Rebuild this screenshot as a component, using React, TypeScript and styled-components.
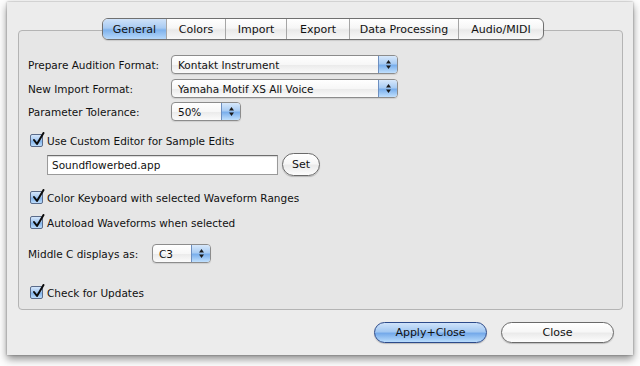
import React from 'react';
import styled, {createGlobalStyle} from 'styled-components';

const Global = createGlobalStyle`
    html, body {
        margin: 0;
        padding: 0;
        background: #fdfdfd;
    }
    body {
        width: 640px;
        height: 366px;
        overflow: hidden;
        font-family: "DejaVu Sans", "Liberation Sans", sans-serif;
        font-size: 10.5px;
        color: #111;
    }
`;

const Window = styled.div`
    margin: 2px 0 0 7px;
    width: 626px;
    height: 353px;
    background: #ececec;
    box-shadow: 0 4px 8px rgba(0, 0, 0, 0.45), 0 0 2px rgba(0, 0, 0, 0.35);
    display: flex;
    flex-direction: column;
    padding: 16px 10px 0 11px;
    box-sizing: border-box;
`;

const TabBar = styled.div`
    display: flex;
    align-self: center;
    margin-left: 5px;
    height: 20px;
    border: 1px solid #707070;
    border-radius: 6px;
    overflow: hidden;
    background: linear-gradient(#ffffff 0%, #f6f6f6 45%, #e9e9e9 55%, #f8f8f8 100%);
    position: relative;
    z-index: 1;
    margin-bottom: -10px;
    box-shadow: 0 1px 1px rgba(0, 0, 0, 0.12);
`;

const Tab = styled.div<{$active?: boolean; $w: number}>`
    width: ${p => p.$w}px;
    display: flex;
    align-items: center;
    justify-content: center;
    border-left: 1px solid ${p => (p.$active ? '#5a6e96' : '#a6a6a6')};
    &:first-child {
        border-left: none;
    }
    background: ${p => (p.$active
        ? 'linear-gradient(#cfe2f9 0%, #a8cbf2 45%, #7fb2ec 55%, #b6d8fa 100%)'
        : 'transparent')};
    font-size: 11px;
`;

const Group = styled.div`
    height: 280px;
    border: 1px solid #b4b4b4;
    border-radius: 4px;
    background: #e6e6e6;
    box-sizing: border-box;
    padding: 0 0 0 9px;
    display: flex;
    flex-direction: column;
`;

const Row = styled.div<{$top: number; $left?: number}>`
    display: flex;
    align-items: center;
    margin-top: ${p => p.$top}px;
    margin-left: ${p => p.$left ?? 0}px;
`;

const Label = styled.div<{$w: number}>`
    width: ${p => p.$w}px;
    white-space: nowrap;
`;

const Popup = styled.div<{$w: number}>`
    width: ${p => p.$w}px;
    height: 19px;
    box-sizing: border-box;
    border: 1px solid #8c8c8c;
    border-radius: 4px;
    display: flex;
    overflow: hidden;
    background: linear-gradient(#ffffff 0%, #f7f7f7 50%, #ebebeb 55%, #fbfbfb 100%);
    box-shadow: 0 1px 1px rgba(0, 0, 0, 0.1);
`;

const PopupText = styled.div`
    flex: 1;
    padding-left: 6px;
    display: flex;
    align-items: center;
    white-space: nowrap;
`;

const PopupArrows = styled.div`
    width: 18px;
    border-left: 1px solid #6d8fc0;
    background: linear-gradient(#d7e8fb 0%, #a9ccf3 45%, #7aafec 55%, #c1e0fd 100%);
    display: flex;
    align-items: center;
    justify-content: center;
`;

const CheckRow = styled.label<{$top: number}>`
    display: flex;
    align-items: center;
    margin-top: ${p => p.$top}px;
    margin-left: 2px;
    gap: 4px;
`;

const CheckBox = styled.div`
    width: 13px;
    height: 13px;
    box-sizing: border-box;
    border: 1px solid #5a6b8a;
    border-radius: 2px;
    background: linear-gradient(#d4e6fb 0%, #a7c9f1 45%, #80b3ec 55%, #bcdcfb 100%);
    position: relative;
    flex: none;
`;

const Tick = styled.svg`
    position: absolute;
    left: 1px;
    top: -3px;
`;

const TextField = styled.div`
    width: 231px;
    height: 20px;
    box-sizing: border-box;
    border: 1px solid #9a9a9a;
    border-top-color: #6e6e6e;
    background: #fff;
    box-shadow: inset 0 1px 1px rgba(0, 0, 0, 0.15);
    display: flex;
    align-items: center;
    padding-left: 4px;
`;

const Button = styled.div<{$w: number; $h?: number; $default?: boolean}>`
    width: ${p => p.$w}px;
    height: ${p => p.$h ?? 21}px;
    box-sizing: border-box;
    border-radius: 12px;
    border: 1px solid ${p => (p.$default ? '#2c4a8a' : '#6a6a6a')};
    background: ${p => (p.$default
        ? 'linear-gradient(#cfe3fa 0%, #a3c8f2 45%, #75aaea 55%, #b9dcfc 100%)'
        : 'linear-gradient(#ffffff 0%, #f7f7f7 45%, #ebebeb 55%, #fdfdfd 100%)')};
    box-shadow: 0 1px 1px rgba(0, 0, 0, 0.2);
    display: flex;
    align-items: center;
    justify-content: center;
    font-size: 11px;
`;

const SetButton = styled(Button)`
    margin-left: 4px;
`;

const Footer = styled.div`
    display: flex;
    justify-content: flex-end;
    gap: 14px;
    margin-top: 12px;
    padding-right: 9px;
`;

function Arrows() {
    return <svg width="7" height="11" viewBox="0 0 7 11">
        <path d="M3.5 1 L6 4.5 L1 4.5 Z" fill="#1a1a1a"/>
        <path d="M3.5 10 L6 6.5 L1 6.5 Z" fill="#1a1a1a"/>
    </svg>;
}

function Select({w, value}: {w: number; value: string}) {
    return <Popup $w={w}>
        <PopupText>{value}</PopupText>
        <PopupArrows><Arrows/></PopupArrows>
    </Popup>;
}

function Check({top, children}: {top: number; children: React.ReactNode}) {
    return <CheckRow $top={top}>
        <CheckBox>
            <Tick width="13" height="14" viewBox="0 0 13 14">
                <path d="M2 8 L5 12 L11.5 1" fill="none" stroke="#0c0c0c" strokeWidth="2"
                      strokeLinejoin="round" strokeLinecap="round"/>
            </Tick>
        </CheckBox>
        <span>{children}</span>
    </CheckRow>;
}

const tabs: [string, number][] = [
    ['General', 63],
    ['Colors', 58],
    ['Import', 60],
    ['Export', 62],
    ['Data Processing', 108],
    ['Audio/MIDI', 84],
];

export default function App() {
    return <>
        <Global/>
        <Window>
            <TabBar>
                {tabs.map(([name, w], i) => <Tab key={name} $w={w} $active={i === 0}>{name}</Tab>)}
            </TabBar>
            <Group>
                <Row $top={24}>
                    <Label $w={143}>Prepare Audition Format:</Label>
                    <Select w={227} value="Kontakt Instrument"/>
                </Row>
                <Row $top={5}>
                    <Label $w={143}>New Import Format:</Label>
                    <Select w={227} value="Yamaha Motif XS All Voice"/>
                </Row>
                <Row $top={4}>
                    <Label $w={143}>Parameter Tolerance:</Label>
                    <Select w={70} value="50%"/>
                </Row>
                <Check top={13}>Use Custom Editor for Sample Edits</Check>
                <Row $top={6} $left={19}>
                    <TextField>Soundflowerbed.app</TextField>
                    <SetButton $w={38} $h={23}>Set</SetButton>
                </Row>
                <Check top={15}>Color Keyboard with selected Waveform Ranges</Check>
                <Check top={12}>Autoload Waveforms when selected</Check>
                <Row $top={15}>
                    <Label $w={124}>Middle C displays as:</Label>
                    <Select w={59} value="C3"/>
                </Row>
                <Check top={23}>Check for Updates</Check>
            </Group>
            <Footer>
                <Button $w={113} $default>Apply+Close</Button>
                <Button $w={113}>Close</Button>
            </Footer>
        </Window>
    </>;
}
